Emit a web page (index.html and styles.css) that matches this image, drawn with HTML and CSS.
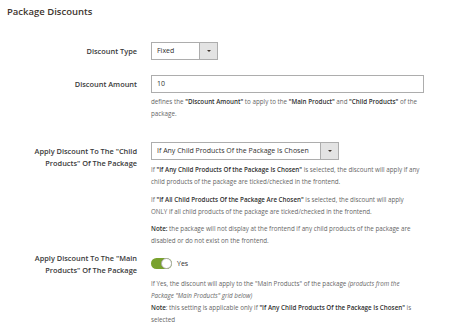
FILE: index.html
```html
<!doctype html>
<html lang="en">
<head>
  <meta charset="UTF-8" />
  <title>Package Discounts</title>
  <link rel="stylesheet" href="styles.css">
</head>
<body>
  <section class="fieldset">
    <h2 class="fieldset-title">Package Discounts</h2>

    <div class="field">
      <label class="field-label">Discount Type</label>
      <div class="field-control">
        <div class="select select-short">
          <span class="select-value">Fixed</span>
          <span class="select-arrow"></span>
        </div>
      </div>
    </div>

    <div class="field field-noted">
      <label class="field-label">Discount Amount</label>
      <div class="field-control">
        <div class="input">10</div>
        <div class="note">
          <p>defines the <b>"Discount Amount"</b> to apply to the <b>"Main Product"</b> and <b>"Child Products"</b> of the package.</p>
        </div>
      </div>
    </div>

    <div class="field field-noted">
      <label class="field-label">Apply Discount To The "Child Products" Of The Package</label>
      <div class="field-control">
        <div class="select select-long">
          <span class="select-value">If Any Child Products Of the Package Is Chosen</span>
          <span class="select-arrow"></span>
        </div>
        <div class="note note-spaced">
          <p>If <b>"If Any Child Products Of the Package Is Chosen"</b> is selected, the discount will apply if any child products of the package are ticked/checked in the frontend.</p>
          <p>If <b>"If All Child Products Of the Package Are Chosen"</b> is selected, the discount will apply ONLY if all child products of the package are ticked/checked in the frontend.</p>
          <p><b>Note:</b> the package will not display at the frontend if any child products of the package are disabled or do not exist on the frontend.</p>
        </div>
      </div>
    </div>

    <div class="field field-toggle">
      <label class="field-label">Apply Discount To The "Main Products" Of The Package</label>
      <div class="field-control">
        <div class="toggle">
          <span class="toggle-track"><span class="toggle-knob"></span></span>
          <span class="toggle-text">Yes</span>
        </div>
        <div class="note note-toggle">
          <p>If Yes, the discount will apply to the "Main Products" of the package <i>(products from the Package "Main Products" grid below)</i><br><b>Note</b>: this setting is applicable only if <b>"If Any Child Products Of the Package Is Chosen"</b> is selected</p>
        </div>
      </div>
    </div>
  </section>
</body>
</html>
```

FILE: styles.css
```css
/* ------------------ Reset & Globals ------------------ */
* {
  margin: 0;
  padding: 0;
  box-sizing: border-box;
}
body {
  font-family: 'Open Sans', 'Noto Sans', sans-serif;
  background: #fff;
  color: #303030;
}

/* ------------------ Fieldset ------------------ */
.fieldset {
  padding: 6px 7px;
}
.fieldset-title {
  font-size: 9.5px;
  font-weight: 600;
  line-height: 12px;
  color: #41362f;
  margin-bottom: 24px;
}
.field {
  display: grid;
  grid-template-columns: 130px 273px;
  column-gap: 14px;
  margin-bottom: 15px;
}
.field-noted {
  margin-bottom: 22px;
}
.field-label {
  text-align: right;
  font-size: 7.4px;
  font-weight: 600;
  line-height: 12px;
  padding-top: 3px;
  color: #3a3a3a;
}

/* ------------------ Controls ------------------ */
.select {
  display: flex;
  height: 18px;
  border: 1px solid #adadad;
  background: #fff;
  font-size: 7px;
  color: #303030;
}
.select-short {
  width: 67px;
}
.select-long {
  width: 188px;
}
.select-value {
  flex: 1;
  padding-left: 5px;
  line-height: 16px;
  white-space: nowrap;
  overflow: hidden;
}
.select-arrow {
  width: 18px;
  background: #e3e3e3;
  border-left: 1px solid #adadad;
  position: relative;
}
.select-arrow::after {
  content: "";
  position: absolute;
  left: 7px;
  top: 7px;
  border-left: 2px solid transparent;
  border-right: 2px solid transparent;
  border-top: 2.5px solid #41362f;
}
.input {
  height: 18px;
  border: 1px solid #adadad;
  padding-left: 5px;
  font-size: 7px;
  line-height: 16px;
  color: #303030;
}

/* ------------------ Notes ------------------ */
.note {
  margin-top: 3px;
  max-width: 270px;
  font-size: 6.25px;
  line-height: 12px;
  color: #666;
}
.note-spaced {
  margin-top: 4px;
}
.note p + p {
  margin-top: 5.5px;
}
.note b {
  font-weight: 600;
  color: #303030;
}

/* ------------------ Toggle ------------------ */
.field-toggle {
  margin-top: -17px;
}
.field-toggle .field-label {
  padding-top: 0;
}
.toggle {
  display: flex;
  align-items: center;
  gap: 5px;
  height: 12px;
  margin-top: 5px;
}
.toggle-track {
  width: 21px;
  height: 11px;
  border-radius: 6px;
  background: #79a22e;
  position: relative;
}
.toggle-knob {
  position: absolute;
  right: 0;
  top: 0;
  width: 11px;
  height: 11px;
  border-radius: 50%;
  background: #fff;
  border: 1px solid #adadad;
}
.toggle-text {
  font-size: 7px;
  color: #303030;
}
.note-toggle {
  margin-top: 9px;
  max-width: 263px;
}
```
